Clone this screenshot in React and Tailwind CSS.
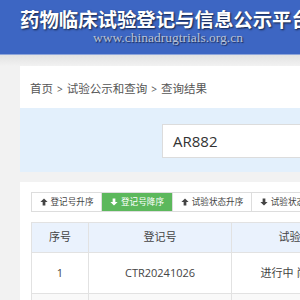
import { useState } from "react";

const cjk = { fontFamily: '"Open Sans","Noto Sans CJK SC",sans-serif' };

function Arrow({ up, className }) {
  return (
    <svg viewBox="0 0 10 10" className={className} fill="currentColor">
      {up ? (
        <path d="M5 0.5 L9.5 5 L6.7 5 L6.7 9.5 L3.3 9.5 L3.3 5 L0.5 5 Z" />
      ) : (
        <path d="M5 9.5 L9.5 5 L6.7 5 L6.7 0.5 L3.3 0.5 L3.3 5 L0.5 5 Z" />
      )}
    </svg>
  );
}

const sorts = [
  { label: "登记号升序", up: true, w: "w-[69px]" },
  { label: "登记号降序", up: false, w: "w-[71px]" },
  { label: "试验状态升序", up: true, w: "w-[79px]" },
  { label: "试验状态降序", up: false, w: "w-[79px]" },
];

export default function App() {
  const [active, setActive] = useState(1);

  return (
    <div className="w-[300px] h-[300px] overflow-hidden bg-[#f2f2f2]" style={cjk}>
      {/* Header */}
      <div className="h-[55px] bg-[#3d66c3] border-b border-[#8ea5d9] relative">
        <div className="absolute left-[20px] top-[8px] whitespace-nowrap text-white font-bold text-[19.4px] leading-[24px] [text-shadow:1px_1px_2px_rgba(0,0,0,0.7)]">
          药物临床试验登记与信息公示平台
        </div>
        <div
          className="absolute left-[93px] top-[31px] whitespace-nowrap text-[13.5px] leading-[14px] text-[#b9c2d6] [text-shadow:1px_1px_1px_rgba(20,30,60,0.8)]"
          style={{ fontFamily: '"Liberation Serif",serif' }}
        >
          www.chinadrugtrials.org.cn
        </div>
      </div>
      <div className="h-[11px] bg-gradient-to-b from-[#e2e2e2] to-[#f2f2f2]" />

      <div className="ml-[20px] w-[400px]">
        {/* Breadcrumb */}
        <div className="h-[42px] bg-white flex items-center pl-[10px] pt-[4px] text-[11.5px] text-[#555] whitespace-nowrap">
          <span>首页</span>
          <span className="mx-[4px] text-[10px]">&gt;</span>
          <span>试验公示和查询</span>
          <span className="mx-[4px] text-[10px]">&gt;</span>
          <span>查询结果</span>
        </div>

        {/* Search */}
        <div className="h-[64px] bg-[#e3f0fc] pl-[142px] pt-[16px]">
          <div className="h-[34px] w-[300px] bg-white border border-[#dcdcdc] flex items-center pl-[10px] text-[15px] text-[#333]">
            AR882
          </div>
        </div>

        {/* Results */}
        <div className="mt-[10px] bg-white pl-[11px] pt-[10px]">
          <div className="flex h-[20px] border border-[#ddd] w-fit">
            {sorts.map((s, i) => (
              <button
                key={s.label}
                onClick={() => setActive(i)}
                className={`${s.w} flex items-center justify-center gap-[3px] text-[8.6px] whitespace-nowrap ${
                  i > 0 ? "border-l border-[#ddd]" : ""
                } ${i === active ? "bg-[#5cb85c] text-white" : "bg-white text-[#444]"}`}
              >
                <Arrow up={s.up} className="w-[8px] h-[8px]" />
                {s.label}
              </button>
            ))}
          </div>

          <table className="mt-[10px] border-collapse text-[11px] text-[#444]">
            <thead>
              <tr className="h-[30px] bg-[#eaf2fd]">
                <th className="w-[57px] border border-[#e2e2e2] font-normal">序号</th>
                <th className="w-[143px] border border-[#e2e2e2] font-normal">登记号</th>
                <th className="w-[138px] border border-[#e2e2e2] font-normal">试验状态</th>
              </tr>
            </thead>
            <tbody>
              <tr className="h-[41px]">
                <td className="border border-[#e2e2e2] text-center">1</td>
                <td className="border border-[#e2e2e2] text-center">CTR20241026</td>
                <td className="border border-[#e2e2e2] text-center whitespace-nowrap">进行中 尚未招募</td>
              </tr>
              <tr className="h-[30px] bg-[#f9f9f9]">
                <td className="border border-[#e2e2e2]" />
                <td className="border border-[#e2e2e2]" />
                <td className="border border-[#e2e2e2]" />
              </tr>
            </tbody>
          </table>
        </div>
      </div>
    </div>
  );
}
